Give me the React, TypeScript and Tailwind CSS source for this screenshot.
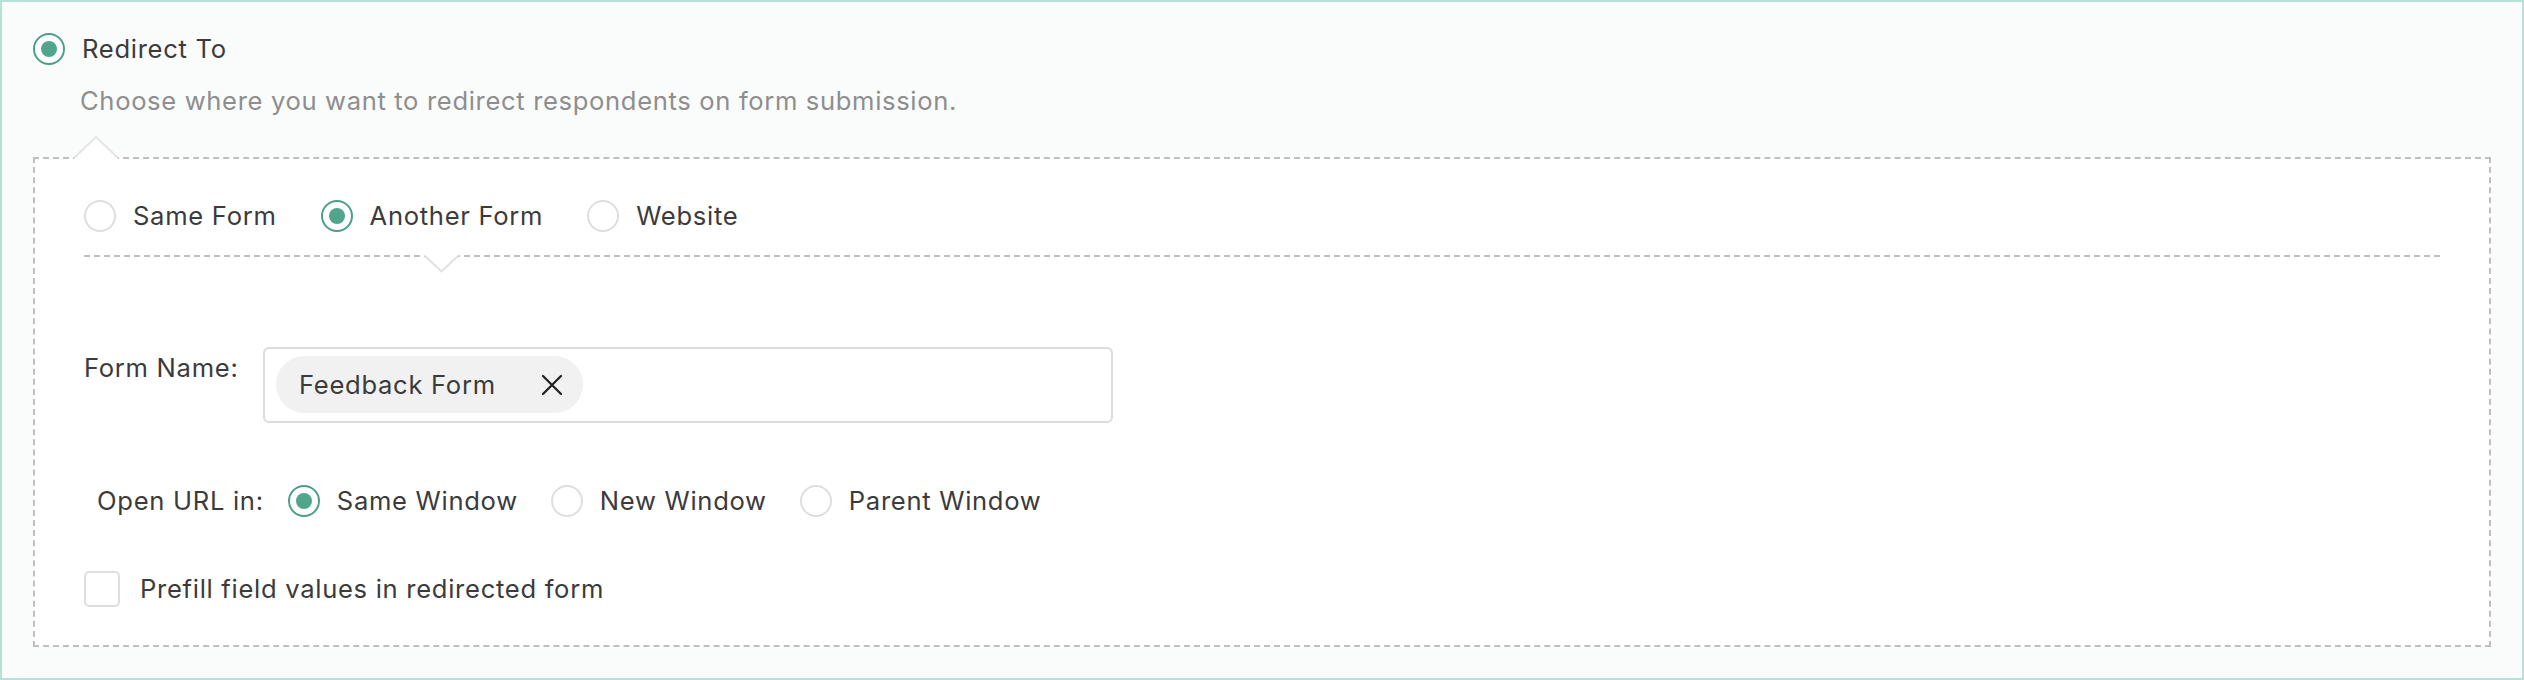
import React from 'react';

const font = "font-['Inter',_'Noto_Sans',_sans-serif]";

const Radio: React.FC<{ checked?: boolean }> = ({ checked }) => (
  <span
    className={
      checked
        ? 'flex h-[32px] w-[32px] shrink-0 items-center justify-center rounded-full border-2 border-[#4b9f86] bg-white'
        : 'flex h-[32px] w-[32px] shrink-0 items-center justify-center rounded-full border-2 border-[#dedede] bg-white'
    }
  >
    {checked && <span className="h-[16px] w-[16px] rounded-full bg-[#50a58a]" />}
  </span>
);

const RadioOption: React.FC<{ label: string; checked?: boolean }> = ({ label, checked }) => (
  <label className="flex items-center gap-[17px] text-[25.6px] leading-[32px] tracking-[0.7px] text-[#3b3b3b]">
    <Radio checked={checked} />
    <span>{label}</span>
  </label>
);

const App: React.FC = () => {
  return (
    <div className={`${font} h-[680px] w-[2524px] border-2 border-[#b4e2d7] bg-[#fafcfb] px-[31px] pt-[31px]`}>
      {/* Header */}
      <RadioOption label="Redirect To" checked />
      <p className="ml-[47px] mt-[20px] text-[25.6px] leading-[32px] tracking-[0.65px] text-[#8e8e8e]">
        Choose where you want to redirect respondents on form submission.
      </p>

      {/* Dashed settings box */}
      <div className="relative mt-[40px] h-[490px] border-2 border-dashed border-[#bfbfbf] bg-white px-[49px] pt-[41px]">
        <svg className="absolute left-[38px] top-[-23px]" width="46" height="23" viewBox="0 0 46 23">
          <path d="M1 23 L23 1 L45 23 Z" fill="#ffffff" />
          <path d="M1 22 L23 1 L45 22" fill="none" stroke="#e4e4e4" strokeWidth="2" />
        </svg>

        <div className="flex items-center gap-[44px]">
          <RadioOption label="Same Form" />
          <RadioOption label="Another Form" checked />
          <RadioOption label="Website" />
        </div>

        <div className="relative mt-[23px] border-t-2 border-dashed border-[#bfbfbf]">
          <svg className="absolute left-[340px] top-[-2px]" width="35" height="18" viewBox="0 0 35 18">
            <path d="M0 0 L35 0 L17.5 17 Z" fill="#ffffff" />
            <path d="M1 1 L17.5 16.5 L34 1" fill="none" stroke="#e0e0e0" strokeWidth="2" />
          </svg>
        </div>

        {/* Form name */}
        <div className="mt-[90px] flex items-start">
          <span className="w-[179px] shrink-0 pt-[5px] text-[25.6px] leading-[32px] tracking-[0.7px] text-[#3b3b3b]">Form Name:</span>
          <div className="flex h-[76px] w-[850px] items-start rounded-[6px] border-2 border-[#dcdcdc] bg-white pl-[11px] pt-[7px]">
            <div className="flex h-[57px] items-center rounded-full bg-[#f1f1f1] pl-[23px] pr-[20px]">
              <span className="text-[25.6px] leading-[32px] tracking-[0.7px] text-[#3b3b3b]">Feedback Form</span>
              <svg className="ml-[45px]" width="22" height="22" viewBox="0 0 22 22">
                <path d="M2 2 L20 20 M20 2 L2 20" stroke="#1f1f1f" strokeWidth="2.2" strokeLinecap="round" />
              </svg>
            </div>
          </div>
        </div>

        {/* Open URL in */}
        <div className="ml-[13px] mt-[62px] flex items-center">
          <span className="mr-[24px] text-[25.6px] leading-[32px] tracking-[0.7px] text-[#3b3b3b]">Open URL in:</span>
          <div className="flex items-center gap-[33px]">
            <RadioOption label="Same Window" checked />
            <RadioOption label="New Window" />
            <RadioOption label="Parent Window" />
          </div>
        </div>

        {/* Prefill */}
        <label className="mt-[54px] flex items-center gap-[20px] text-[25.6px] leading-[32px] tracking-[0.7px] text-[#3b3b3b]">
          <span className="h-[36px] w-[36px] shrink-0 rounded-[5px] border-2 border-[#dedede] bg-white" />
          <span>Prefill field values in redirected form</span>
        </label>
      </div>
    </div>
  );
};

export default App;
